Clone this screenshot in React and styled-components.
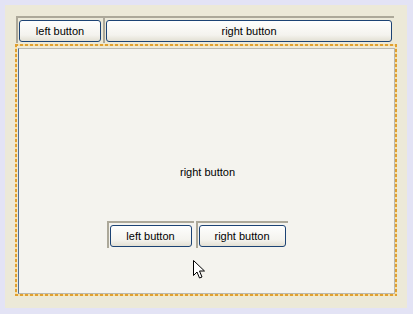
import React from 'react';
import styled, {createGlobalStyle} from 'styled-components';

const Global = createGlobalStyle`
    html, body {
        margin: 0;
        padding: 0;
        background: #e3e3f5;
    }
`;

const App = () => {
    return (
        <Page>
            <Global/>
            <Frame>
                <Toolbar>
                    <Cell><Button>left button</Button></Cell>
                    <Cell><Button>right button</Button></Cell>
                </Toolbar>
                <Dashed>
                    <Panel>
                        <Label>right button</Label>
                        <ButtonRow>
                            <Cell><Button $width={82}>left button</Button></Cell>
                            <Cell><Button $width={87}>right button</Button></Cell>
                        </ButtonRow>
                        <Cursor viewBox="0 0 12 19" width="12" height="19">
                            <path d="M0.5 0.5 L0.5 15.5 L4 12 L6.5 18 L9 17 L6.5 11 L11.5 11 Z"
                                  fill="#fff" stroke="#000" strokeWidth="1" strokeLinejoin="miter"/>
                        </Cursor>
                    </Panel>
                </Dashed>
            </Frame>
        </Page>
    );
};

export default App;

const Page = styled.div`
    width: 413px;
    height: 314px;
    box-sizing: border-box;
    padding: 5px 6px 6px 5px;
    background: #e3e3f5;
    font-family: Tahoma, "Liberation Sans", Arial, sans-serif;
    font-size: 11px;
    color: #000;
`;

const Frame = styled.div`
    height: 100%;
    box-sizing: border-box;
    background: #ece9d8;
    padding: 11px 10px 12px 10px;
    display: flex;
    flex-direction: column;
`;

const Toolbar = styled.div`
    display: grid;
    grid-template-columns: 87px 1fr;
    margin: 0 3px 0 1px;
    height: 27px;
`;

const Cell = styled.div`
    display: flex;
    box-sizing: border-box;
    border-top: 2px solid #aca899;
    border-left: 2px solid #aca899;
    padding: 2px 2px 1px 1px;
`;

const Button = styled.button`
    flex: ${p => p.$width ? '0 0 auto' : '1'};
    width: ${p => p.$width ? `${p.$width}px` : 'auto'};
    height: 22px;
    box-sizing: border-box;
    border: 1px solid #1c4374;
    border-radius: 3px;
    background: linear-gradient(#fefefd, #f4f3ee 70%, #e3e0d4);
    font-family: inherit;
    font-size: 11px;
    color: #000;
    padding: 0;
`;

const dashH = 'repeating-linear-gradient(90deg, #e0a030 0 3px, #f7dfa6 3px 5px)';
const dashV = 'repeating-linear-gradient(180deg, #e0a030 0 3px, #f7dfa6 3px 5px)';

const Dashed = styled.div`
    flex: 1;
    margin-top: 1px;
    padding: 2px;
    background:
        ${dashH} top left / 100% 2px no-repeat,
        ${dashH} bottom left / 100% 2px no-repeat,
        ${dashV} top left / 2px 100% no-repeat,
        ${dashV} top right / 2px 100% no-repeat,
        #ece9d8;
    display: flex;
`;

const Panel = styled.div`
    position: relative;
    flex: 1;
    margin: 2px 0 0 1px;
    border: 1px solid #b9b8b0;
    border-left-color: #4f6f93;
    background: #f4f3ee;
    display: flex;
    flex-direction: column;
    align-items: center;
    padding-top: 117px;
`;

const Label = styled.div`
    font-size: 11px;
    margin-left: 2px;
`;

const ButtonRow = styled.div`
    display: flex;
    gap: 2px;
    margin-top: 43px;
    margin-right: 19px;
`;

const Cursor = styled.svg`
    position: absolute;
    left: 174px;
    top: 211px;
`;
